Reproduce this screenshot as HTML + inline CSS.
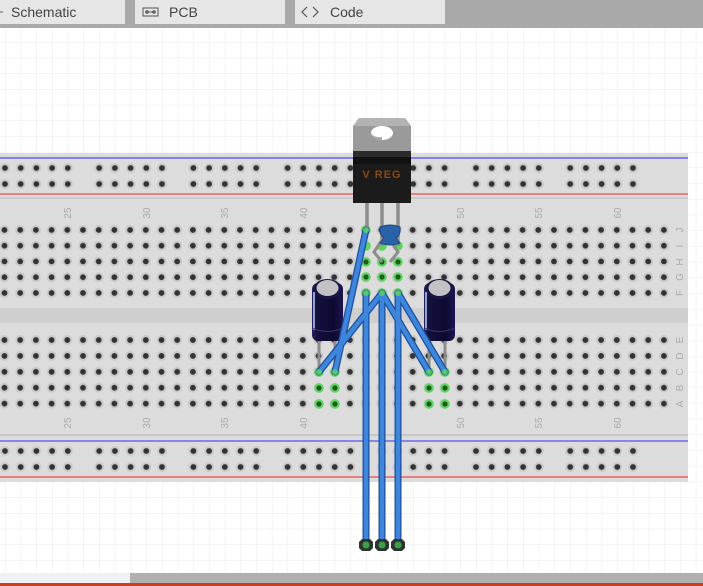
<!DOCTYPE html>
<html><head><meta charset="utf-8"><style>
html,body{margin:0;padding:0;width:703px;height:586px;overflow:hidden;background:#fff;font-family:"Liberation Sans",sans-serif}
svg{position:absolute;left:0;top:0}
</style></head><body>
<svg width="703" height="586" viewBox="0 0 703 586" xmlns="http://www.w3.org/2000/svg">
<defs>
<pattern id="grid" patternUnits="userSpaceOnUse" x="5" y="10.6" width="15.7" height="15.7">
<path d="M0 0V15.7M0 0H15.7" stroke="#e6eaf0" stroke-width="1" fill="none"/>
</pattern>
<pattern id="holes" patternUnits="userSpaceOnUse" x="-3.35" y="222.15" width="15.7" height="15.75">
<circle cx="7.85" cy="7.85" r="5" fill="#cacaca"/><circle cx="7.85" cy="7.85" r="2.9" fill="#333"/>
</pattern>
<pattern id="holesB" patternUnits="userSpaceOnUse" x="-3.35" y="332.15" width="15.7" height="15.9">
<circle cx="7.85" cy="7.85" r="5" fill="#cacaca"/><circle cx="7.85" cy="7.85" r="2.9" fill="#333"/>
</pattern>
<pattern id="rail" patternUnits="userSpaceOnUse" x="-2.85" y="160.15" width="94.2" height="16">
<g fill="#cacaca"><circle cx="7.85" cy="7.85" r="5"/><circle cx="23.55" cy="7.85" r="5"/><circle cx="39.25" cy="7.85" r="5"/><circle cx="54.95" cy="7.85" r="5"/><circle cx="70.65" cy="7.85" r="5"/></g>
<g fill="#333"><circle cx="7.85" cy="7.85" r="2.9"/><circle cx="23.55" cy="7.85" r="2.9"/><circle cx="39.25" cy="7.85" r="2.9"/><circle cx="54.95" cy="7.85" r="2.9"/><circle cx="70.65" cy="7.85" r="2.9"/></g>
</pattern>
<pattern id="railB" patternUnits="userSpaceOnUse" x="-2.85" y="443.15" width="94.2" height="16">
<g fill="#cacaca"><circle cx="7.85" cy="7.85" r="5"/><circle cx="23.55" cy="7.85" r="5"/><circle cx="39.25" cy="7.85" r="5"/><circle cx="54.95" cy="7.85" r="5"/><circle cx="70.65" cy="7.85" r="5"/></g>
<g fill="#333"><circle cx="7.85" cy="7.85" r="2.9"/><circle cx="23.55" cy="7.85" r="2.9"/><circle cx="39.25" cy="7.85" r="2.9"/><circle cx="54.95" cy="7.85" r="2.9"/><circle cx="70.65" cy="7.85" r="2.9"/></g>
</pattern>
<linearGradient id="capg" x1="0" x2="1"><stop offset="0" stop-color="#2a2160"/><stop offset="0.15" stop-color="#14103e"/><stop offset="0.7" stop-color="#0c0a30"/><stop offset="1" stop-color="#1c1650"/></linearGradient>
</defs>
<rect width="703" height="586" fill="#fff"/>
<rect x="0" y="26" width="703" height="547" fill="url(#grid)"/>
<!-- tabs -->
<rect x="0" y="0" width="703" height="28" fill="#a9a9a9"/>
<rect x="0" y="0" width="125" height="24" fill="#e6e6e6"/>
<rect x="135" y="0" width="150" height="24" fill="#e6e6e6"/>
<rect x="295" y="0" width="150" height="24" fill="#e6e6e6"/>
<path d="M0 12h3" stroke="#666"/>
<text x="11" y="17" font-size="14" fill="#444">Schematic</text>
<rect x="143" y="8" width="15" height="8" fill="none" stroke="#555" stroke-width="1"/>
<path d="M146 12h9" stroke="#555"/><circle cx="147" cy="12" r="1.3" fill="none" stroke="#555"/><circle cx="154" cy="12" r="1.3" fill="none" stroke="#555"/>
<text x="169" y="17" font-size="14" fill="#444">PCB</text>
<path d="M307 7l-5 5 5 5M313 7l5 5-5 5" stroke="#555" stroke-width="1.2" fill="none"/>
<text x="330" y="17" font-size="14" fill="#444">Code</text>
<!-- breadboard -->
<rect x="0" y="153" width="688" height="329" fill="#dcdcdc"/>
<rect x="0" y="308" width="688" height="15" fill="#cfcfcf"/>
<path d="M0 158H688" stroke="#4b4bf0" stroke-width="1.3"/>
<path d="M0 194H688" stroke="#ee4a4a" stroke-width="1.3"/>
<path d="M0 198H688" stroke="#b8b8b8" stroke-width="1"/>
<path d="M0 435H688" stroke="#b0b0b0" stroke-width="1"/>
<path d="M0 441H688" stroke="#6a6aee" stroke-width="1.5"/>
<path d="M0 477H688" stroke="#ee4a4a" stroke-width="1.3"/>
<rect x="0" y="160" width="642" height="32" fill="url(#rail)"/>
<rect x="0" y="443" width="642" height="32" fill="url(#railB)"/>
<rect x="0" y="222" width="672" height="79" fill="url(#holes)"/>
<rect x="0" y="332" width="672" height="80" fill="url(#holesB)"/>
<g font-size="10" fill="#aaa" text-anchor="middle">
<g transform="translate(71,213) rotate(-90)"><text>25</text></g>
<g transform="translate(150,213) rotate(-90)"><text>30</text></g>
<g transform="translate(228,213) rotate(-90)"><text>35</text></g>
<g transform="translate(307,213) rotate(-90)"><text>40</text></g>
<g transform="translate(464,213) rotate(-90)"><text>50</text></g>
<g transform="translate(542,213) rotate(-90)"><text>55</text></g>
<g transform="translate(621,213) rotate(-90)"><text>60</text></g>
<g transform="translate(71,423) rotate(-90)"><text>25</text></g>
<g transform="translate(150,423) rotate(-90)"><text>30</text></g>
<g transform="translate(228,423) rotate(-90)"><text>35</text></g>
<g transform="translate(307,423) rotate(-90)"><text>40</text></g>
<g transform="translate(464,423) rotate(-90)"><text>50</text></g>
<g transform="translate(542,423) rotate(-90)"><text>55</text></g>
<g transform="translate(621,423) rotate(-90)"><text>60</text></g>
<g transform="translate(683,230) rotate(-90)"><text>J</text></g>
<g transform="translate(683,246) rotate(-90)"><text>I</text></g>
<g transform="translate(683,262) rotate(-90)"><text>H</text></g>
<g transform="translate(683,277) rotate(-90)"><text>G</text></g>
<g transform="translate(683,293) rotate(-90)"><text>F</text></g>
<g transform="translate(683,340) rotate(-90)"><text>E</text></g>
<g transform="translate(683,356) rotate(-90)"><text>D</text></g>
<g transform="translate(683,372) rotate(-90)"><text>C</text></g>
<g transform="translate(683,388) rotate(-90)"><text>B</text></g>
<g transform="translate(683,404) rotate(-90)"><text>A</text></g>
</g>
<!-- green highlighted holes -->
<g fill="#5fd45f">
<circle cx="366" cy="230" r="4.8"/><circle cx="366" cy="246" r="4.8"/><circle cx="366" cy="262" r="4.8"/><circle cx="366" cy="277" r="4.8"/><circle cx="366" cy="293" r="4.8"/>
<circle cx="382" cy="246" r="4.8"/><circle cx="382" cy="262" r="4.8"/><circle cx="382" cy="277" r="4.8"/><circle cx="382" cy="293" r="4.8"/>
<circle cx="398" cy="246" r="4.8"/><circle cx="398" cy="262" r="4.8"/><circle cx="398" cy="277" r="4.8"/><circle cx="398" cy="293" r="4.8"/>
<circle cx="319" cy="372" r="4.8"/><circle cx="319" cy="388" r="4.8"/><circle cx="319" cy="404" r="4.8"/>
<circle cx="335" cy="372" r="4.8"/><circle cx="335" cy="388" r="4.8"/><circle cx="335" cy="404" r="4.8"/>
<circle cx="429" cy="372" r="4.8"/><circle cx="429" cy="388" r="4.8"/><circle cx="429" cy="404" r="4.8"/>
<circle cx="445" cy="372" r="4.8"/><circle cx="445" cy="388" r="4.8"/><circle cx="445" cy="404" r="4.8"/>
</g>
<g fill="#1f5a1f">
<circle cx="319" cy="388" r="2.6"/><circle cx="319" cy="404" r="2.6"/><circle cx="335" cy="388" r="2.6"/><circle cx="335" cy="404" r="2.6"/>
<circle cx="429" cy="388" r="2.6"/><circle cx="429" cy="404" r="2.6"/><circle cx="445" cy="388" r="2.6"/><circle cx="445" cy="404" r="2.6"/>
<circle cx="366" cy="277" r="2.6"/><circle cx="366" cy="262" r="2.6"/><circle cx="382" cy="262" r="2.6"/><circle cx="382" cy="277" r="2.6"/><circle cx="398" cy="262" r="2.6"/><circle cx="398" cy="277" r="2.6"/>
</g>
<!-- regulator legs -->
<g stroke="#8c8c8c" stroke-width="3.5">
<path d="M367 200V232M382 200V246M398 200V246"/>
</g>
<!-- cap legs -->
<g stroke="#8c8c8c" stroke-width="3">
<path d="M319 340V372M335 340V372M429 340V372M445 340V372"/>
<path d="M382 240L374 252L382 262M390 240L398 252L390 262" fill="none"/>
</g>
<!-- regulator -->
<path d="M353 126l6-8h46l6 8v28h-58z" fill="#9a9a9a"/>
<path d="M359 118h46l6 8h-58z" fill="#b3b3b3"/>
<ellipse cx="382" cy="133" rx="11" ry="7" fill="#fff"/>
<path d="M371 133a11 7 0 0 0 11 7v-3a9 5 0 0 1-11-4z" fill="#555" opacity=".5"/>
<rect x="353" y="151" width="58" height="52" fill="#1b1b1b"/>
<rect x="353" y="151" width="58" height="6" fill="#2c2c2c"/>
<rect x="353" y="157" width="58" height="7" fill="#111"/>
<text x="382" y="178" font-size="11" font-weight="bold" fill="#8a4a14" text-anchor="middle" letter-spacing="1">V REG</text>
<!-- ceramic cap -->
<path d="M380 227q10-4 20 0q1 8-4 11l4 5q-10 4-20 0l4-5q-5-3-4-11z" fill="#2a62a8" stroke="#1d4a82" stroke-width="1"/>
<!-- electrolytic caps -->
<g>
<rect x="312" y="283" width="31" height="58" rx="6" fill="url(#capg)"/>
<ellipse cx="327.5" cy="289" rx="14" ry="10" fill="#1a1548"/>
<ellipse cx="327.5" cy="288" rx="11" ry="8" fill="#c2c2c2"/>
<path d="M314 292V330" stroke="#bfe0ff" stroke-width="1.4"/>
<path d="M312 328q15 7 31 0" stroke="#3a3370" fill="none"/>
<rect x="424" y="283" width="31" height="58" rx="6" fill="url(#capg)"/>
<ellipse cx="439.5" cy="289" rx="14" ry="10" fill="#1a1548"/>
<ellipse cx="439.5" cy="288" rx="11" ry="8" fill="#c2c2c2"/>
<path d="M426 292V330" stroke="#bfe0ff" stroke-width="1.4"/>
<path d="M424 328q15 7 31 0" stroke="#3a3370" fill="none"/>
</g>
<!-- wires -->
<g stroke-linecap="round" fill="none">
<g stroke="#1d4f9c" stroke-width="7">
<path d="M366 230L335 372M382 293L319 372M382 293L429 372M398 293L445 372M366 293V545M382 293V545M398 293V545"/>
</g>
<g stroke="#3d86dc" stroke-width="4.5">
<path d="M366 230L335 372M382 293L319 372M382 293L429 372M398 293L445 372M366 293V545M382 293V545M398 293V545"/>
</g>
</g>
<g fill="#5fd45f" opacity=".8"><circle cx="366" cy="230" r="3"/><circle cx="335" cy="372" r="3"/><circle cx="319" cy="372" r="3"/><circle cx="429" cy="372" r="3"/><circle cx="445" cy="372" r="3"/><circle cx="382" cy="293" r="3"/><circle cx="398" cy="293" r="3"/><circle cx="366" cy="293" r="3"/></g>
<g fill="#2e3530">
<path d="M359 542l3-3h8l3 3v6l-3 3h-8l-3-3z"/><path d="M375 542l3-3h8l3 3v6l-3 3h-8l-3-3z"/><path d="M391 542l3-3h8l3 3v6l-3 3h-8l-3-3z"/>
</g>
<g fill="#3aa04a"><circle cx="366" cy="545" r="3.5"/><circle cx="382" cy="545" r="3.5"/><circle cx="398" cy="545" r="3.5"/></g>
<!-- bottom bars -->
<rect x="0" y="573" width="130" height="10" fill="#eef2f4"/>
<rect x="130" y="573" width="573" height="10" fill="#b0b0b0"/>
<rect x="0" y="583" width="703" height="3" fill="#d23a22"/>
</svg>
</body></html>
